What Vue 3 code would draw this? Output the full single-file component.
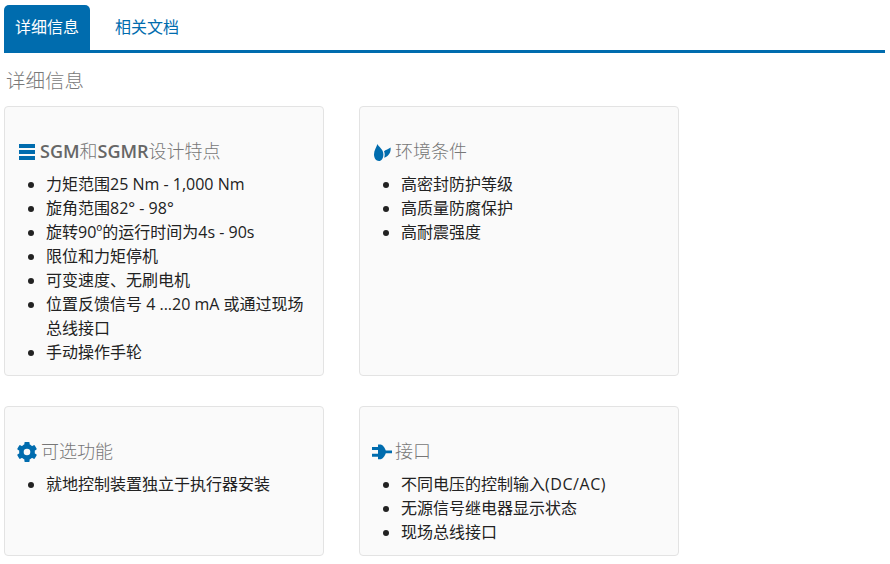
<script setup>
const cards = [
  { key: 'bars', title: [['SGM', true], ['和', false], ['SGMR', true], ['设计特点', false]], tall: true,
    items: ['力矩范围25 Nm - 1,000 Nm', '旋角范围82° - 98°', '旋转90º的运行时间为4s - 90s', '限位和力矩停机', '可变速度、无刷电机', '位置反馈信号 4 ...20 mA 或通过现场总线接口', '手动操作手轮'] },
  { key: 'leaf', title: [['环境条件', false]], tall: true,
    items: ['高密封防护等级', '高质量防腐保护', '高耐震强度'] },
  { key: 'cog', title: [['可选功能', false]], tall: false,
    items: ['就地控制装置独立于执行器安装'] },
  { key: 'plug', title: [['接口', false]], tall: false,
    items: ['不同电压的控制输入', '无源信号继电器显示状态', '现场总线接口'], suffix: '(DC/AC)' }
]
</script>

<template>
  <div class="page">
    <nav class="tabs">
      <a class="tab active">详细信息</a>
      <a class="tab">相关文档</a>
    </nav>
    <h2 class="heading">详细信息</h2>
    <div class="grid">
      <section v-for="c in cards" :key="c.key" class="card" :class="{ tall: c.tall }">
        <h3 class="title">
          <svg v-if="c.key === 'bars'" class="icon" viewBox="0 0 16 16" width="16" height="16">
            <rect x="0" y="0" width="16" height="4" /><rect x="0" y="6" width="16" height="4" /><rect x="0" y="12" width="16" height="4" />
          </svg>
          <svg v-else-if="c.key === 'leaf'" class="icon leaf" viewBox="0 0 17 17" width="17" height="17">
            <path d="M3.4 0C4.4 2.6 9.4 5 9.4 10.4C9.4 14.2 7.4 17 5 17C2.2 17 0 14.4 0 10.6C0 6.4 2.4 3.2 3.4 0Z" />
            <path d="M16.6 3.4C17 8 15.4 11.6 10.2 13.8C10.9 11.6 10.9 8.8 10 7.2C11.6 5.6 14.6 5 16.6 3.4Z" />
          </svg>
          <svg v-else-if="c.key === 'cog'" class="icon cog" viewBox="0 0 20 20" width="20" height="20">
            <circle cx="10" cy="10" r="5.6" fill="none" stroke="#006cae" stroke-width="4.6" />
            <rect x="7.4" y="0" width="5.2" height="20" rx="0.8" />
            <rect x="7.4" y="0" width="5.2" height="20" rx="0.8" transform="rotate(60 10 10)" />
            <rect x="7.4" y="0" width="5.2" height="20" rx="0.8" transform="rotate(120 10 10)" />
            <circle cx="10" cy="10" r="3.3" fill="#fafafa" />
          </svg>
          <svg v-else class="icon plug" viewBox="0 0 20 16" width="20" height="16">
            <path d="M0 3H6V0.6H8.6C11 0.9 12.8 4 13.8 6.6H20V9.2H13.8C12.8 11.8 11 14.9 8.6 15.2H6V12.8H0V9.8H6V6H0Z" />
          </svg>
          <span class="title-text"><span v-for="(t, i) in c.title" :key="i" :class="{ latin: t[1] }">{{ t[0] }}</span></span>
        </h3>
        <ul class="list">
          <li v-for="(item, i) in c.items" :key="item">{{ item }}<span v-if="c.suffix && i === 0" class="spaced">{{ c.suffix }}</span></li>
        </ul>
      </section>
    </div>
  </div>
</template>

<style scoped>
.page {
  width: 890px;
  height: 564px;
  box-sizing: border-box;
  padding: 5px 5px 0 4px;
  overflow: hidden;
  background: #fff;
  font-family: "Open Sans", "Noto Sans CJK SC", sans-serif;
  font-size: 16px;
  color: #222;
}
.tabs {
  display: flex;
  gap: 14px;
  height: 45px;
  border-bottom: 3px solid #006cae;
}
.tab {
  padding: 0 11px;
  line-height: 45px;
  color: #006cae;
  border-radius: 5px 5px 0 0;
}
.tab.active {
  background: #006cae;
  color: #fff;
}
.heading {
  margin: 15px 0 0 2px;
  font-size: 19.5px;
  line-height: 26px;
  height: 38px;
  font-weight: 300;
  color: #7a7a7a;
}
.grid {
  display: grid;
  grid-template-columns: 320px 320px;
  column-gap: 35px;
  row-gap: 30px;
  justify-content: start;
}
.card {
  box-sizing: border-box;
  height: 150px;
  padding: 30px 14px 0;
  background: #fafafa;
  border: 1px solid #e3e3e3;
  border-radius: 4px;
}
.card.tall {
  height: 270px;
}
.title {
  display: flex;
  align-items: center;
  margin: 0;
  height: 28px;
  font-size: 18px;
  font-weight: 300;
  color: #777;
}
.title-text {
  position: relative;
  top: -1px;
}
.latin {
  font-weight: 600;
  color: #666;
}
.icon {
  fill: #006cae;
  flex: none;
  margin-right: 5px;
  position: relative;
  top: 1px;
}
.leaf {
  margin-right: 4px;
}
.cog {
  margin-left: -2px;
  margin-right: 4px;
}
.plug {
  margin-left: -2px;
  margin-right: 3px;
}
.spaced {
  letter-spacing: 0.55px;
}
.list {
  margin: 7px 0 0;
  padding: 0 0 0 27px;
  line-height: 24px;
}
</style>
